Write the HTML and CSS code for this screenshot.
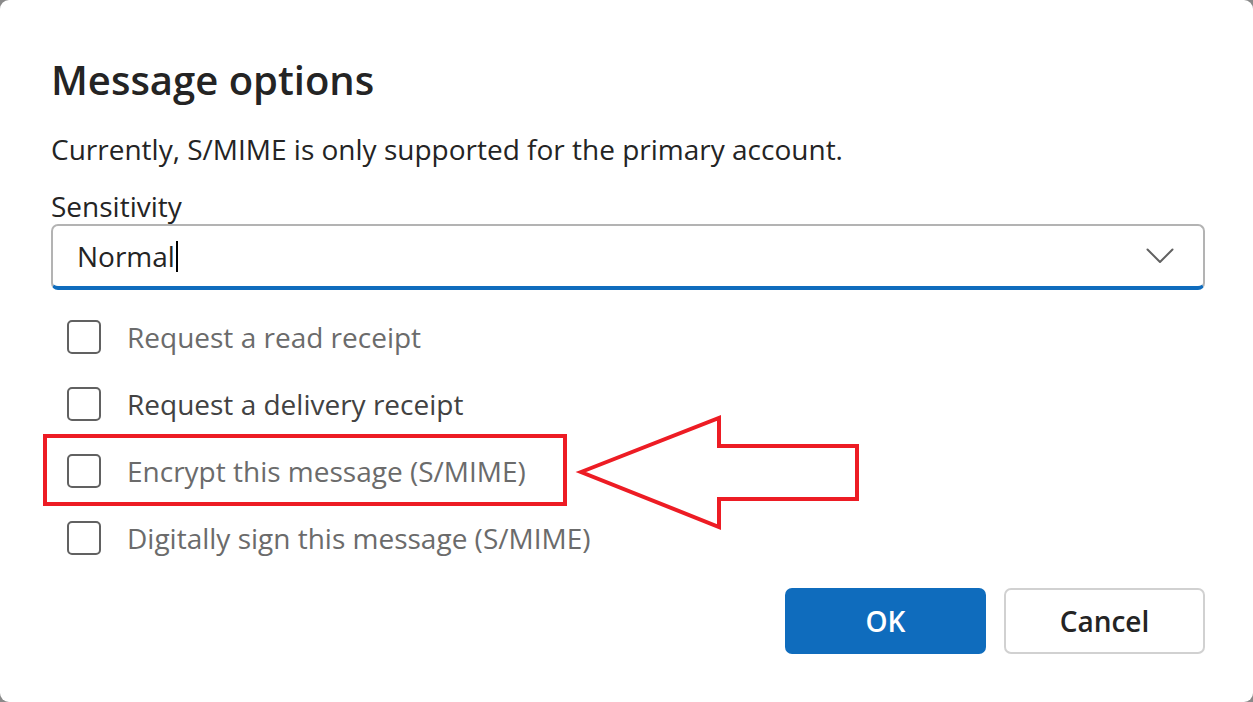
FILE: index.html
```html
<!DOCTYPE html>
<html lang="en">
<head>
    <meta charset="utf-8" />
    <title>Message options</title>
    <link rel="stylesheet" href="styles.css">
</head>
<body>
    <div class="dialog">
        <h1 class="title">Message options</h1>
        <p class="note">Currently, S/MIME is only supported for the primary account.</p>
        <div class="field">
            <label class="field-label">Sensitivity</label>
            <div class="dropdown">
                <span class="dropdown-value">Normal</span><span class="caret"></span>
                <svg class="chevron" width="28" height="16" viewBox="0 0 28 16">
                    <path d="M1.5 1.5 L14 14 L26.5 1.5" fill="none" stroke="#616161" stroke-width="2" stroke-linecap="round" stroke-linejoin="round"/>
                </svg>
            </div>
        </div>
        <div class="options">
            <div class="option disabled"><span class="box"></span><span class="option-text">Request a read receipt</span></div>
            <div class="option"><span class="box"></span><span class="option-text">Request a delivery receipt</span></div>
            <div class="option disabled"><span class="box"></span><span class="option-text">Encrypt this message (S/MIME)</span></div>
            <div class="option disabled"><span class="box"></span><span class="option-text">Digitally sign this message (S/MIME)</span></div>
        </div>
        <div class="buttons">
            <div class="btn btn-primary">OK</div>
            <div class="btn btn-default">Cancel</div>
        </div>
        <!-- annotation drawn over the dialog -->
        <svg class="annotation" width="1253" height="702" viewBox="0 0 1253 702">
            <rect x="45" y="436" width="520" height="68" fill="none" stroke="#ed1c24" stroke-width="4"/>
            <polygon points="581,472 719,418 719,446 857,446 857,499 719,499 719,527" fill="none" stroke="#ed1c24" stroke-width="4" stroke-linejoin="miter"/>
        </svg>
    </div>
</body>
</html>
```

FILE: styles.css
```css
html, body {
    margin: 0;
    padding: 0;
}
body {
    background: #8a8a8a;
    font-family: "Open Sans", "Noto Sans", sans-serif;
    color: #242424;
}
.dialog {
    position: relative;
    box-sizing: border-box;
    width: 1253px;
    height: 702px;
    background: #fff;
    border-radius: 9px;
    padding: 52px 48px 0 51px;
}
.title {
    margin: 0;
    font-size: 40px;
    font-weight: 600;
    line-height: 56px;
}
.note {
    margin: 23px 0 0 0;
    font-size: 28px;
    line-height: 36px;
}
.field {
    margin-top: 21px;
}
.field-label {
    display: block;
    font-size: 28px;
    line-height: 36px;
}
.dropdown {
    position: relative;
    box-sizing: border-box;
    height: 66px;
    border: 2px solid #b3b3b3;
    border-bottom: 4px solid #0f6cbd;
    border-radius: 7px;
    display: flex;
    align-items: center;
    padding-left: 24px;
    font-size: 28px;
}
.caret {
    display: inline-block;
    width: 2px;
    height: 31px;
    background: #000;
    margin-left: 1px;
}
.chevron {
    position: absolute;
    right: 29px;
    top: 22px;
}
.options {
    margin-top: 13px;
}
.option {
    display: flex;
    align-items: center;
    height: 67px;
    font-size: 28px;
    color: #424242;
}
.option.disabled {
    color: #6b6b6b;
}
.box {
    box-sizing: border-box;
    width: 34px;
    height: 34px;
    border: 2px solid #616161;
    border-radius: 5px;
    margin-left: 16px;
    margin-right: 26px;
}
.buttons {
    margin-top: 17px;
    display: flex;
    justify-content: flex-end;
    gap: 18px;
}
.btn {
    box-sizing: border-box;
    width: 201px;
    height: 66px;
    border-radius: 7px;
    display: flex;
    align-items: center;
    justify-content: center;
    font-size: 28px;
    font-weight: 600;
}
.btn-primary {
    background: #0f6cbd;
    color: #fff;
}
.btn-default {
    background: #fff;
    border: 2px solid #d1d1d1;
    color: #242424;
}
.annotation {
    position: absolute;
    left: 0;
    top: 0;
}
```
